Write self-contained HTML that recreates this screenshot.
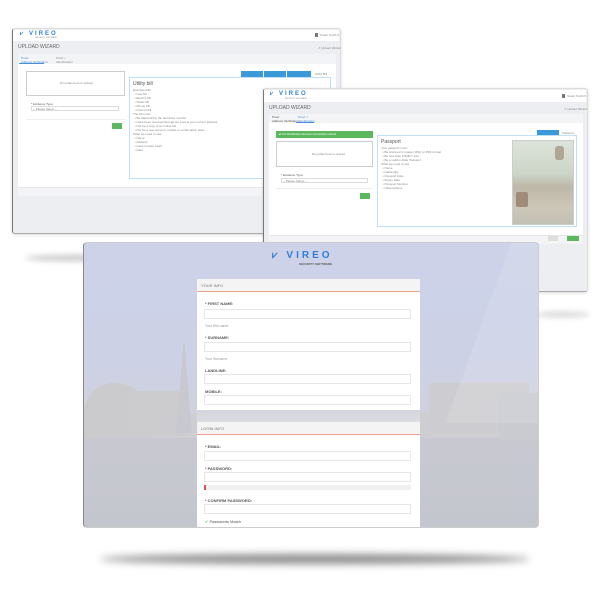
<!DOCTYPE html>
<html><head><style>
*{margin:0;padding:0;box-sizing:border-box}
body{width:600px;height:600px;background:#fff;position:relative;overflow:hidden;font-family:"Liberation Sans",sans-serif}
.a{position:absolute}
.t{position:absolute;font-size:3px;color:#888;white-space:nowrap}
.logo{position:absolute;color:#2f7fd8;font-weight:bold;letter-spacing:2px}
.lbl{position:absolute;left:8px;font-size:4px;color:#555;font-weight:bold}
.inp{position:absolute;left:7px;width:207px;height:10px;border:1px solid #e6e6e6;background:#fff}
.hint{position:absolute;left:8px;font-size:3.5px;color:#999}
</style></head><body>

<div class="a" style="left:25px;top:255px;width:110px;height:6px;border-radius:50%;background:rgba(0,0,0,.22);filter:blur(3px)"></div>
<div class="a" style="left:535px;top:312px;width:55px;height:5px;border-radius:50%;background:rgba(0,0,0,.18);filter:blur(3px)"></div>
<div class="a" style="left:100px;top:554px;width:430px;height:10px;border-radius:50%;background:rgba(0,0,0,.45);filter:blur(4px)"></div>

<!-- SCREEN 1 -->
<div class="a" style="left:12px;top:28px;width:329px;height:206px;background:#eceef2;border:1px solid #ddd;border-left:1.5px solid #777;border-bottom:1.5px solid #aaa;border-radius:3px;box-shadow:0 1px 3px rgba(0,0,0,.15)">
 <div class="a" style="left:0;top:1px;width:326px;height:11px;background:#fff"></div>
 <div class="logo" style="left:7px;top:2px;font-size:6px">⩗ VIREO</div>
 <div class="t" style="left:22px;top:8px;font-size:2px">SECURITY SOFTWARE</div>
 <div class="a" style="left:302px;top:4px;width:3px;height:4px;background:#777"></div>
 <div class="t" style="left:307px;top:4px">Stuart Smith ▾</div>
 <div class="t" style="left:5px;top:15px;font-size:5px;color:#666">UPLOAD WIZARD</div>
 <div class="t" style="left:305px;top:17px">⇗ Upload Wizard</div>
 <div class="a" style="left:5px;top:25px;width:318px;height:10px;background:#f3f4f6"></div>
 <div class="t" style="left:8px;top:27px;color:#4a90d9">Proof<br>Address Verification</div>
 <div class="a" style="left:6px;top:34px;width:25px;height:1px;background:#4a90d9"></div>
 <div class="t" style="left:43px;top:27px">Proof ✓<br>Identification</div>
 <div class="a" style="left:5px;top:35px;width:318px;height:123px;background:#fff"></div>
 <div class="a" style="left:13px;top:42px;width:99px;height:25px;border:1px solid #ccc"></div>
 <div class="t" style="left:47px;top:52px">Drop files here to upload</div>
 <div class="t" style="left:18px;top:73px;color:#555">* Evidence Type:</div>
 <div class="a" style="left:18px;top:77px;width:88px;height:5px;border:1px solid #ddd"></div>
 <div class="t" style="left:20px;top:78px">-- Please Select --</div>
 <div class="a" style="left:13px;top:90px;width:100px;height:1px;background:#eee"></div>
 <div class="a" style="left:99px;top:94px;width:10px;height:6px;background:#5cb85c"></div>
 <div class="a" style="left:228px;top:42px;width:22px;height:6px;background:#3a9ad9"></div>
 <div class="a" style="left:251px;top:42px;width:22px;height:6px;background:#3a9ad9"></div>
 <div class="a" style="left:274px;top:42px;width:24px;height:6px;background:#3a9ad9"></div>
 <div class="t" style="left:302px;top:43px">Utility Bill</div>
 <div class="a" style="left:116px;top:48px;width:202px;height:102px;border:1px solid #bfe0f5"></div>
 <div class="t" style="left:120px;top:52px;font-size:5px;color:#555">Utility bill</div>
 <div class="t" style="left:120px;top:59px;line-height:4px">Example bills:<br>&nbsp; • Gas bill<br>&nbsp; • Electric bill<br>&nbsp; • Water bill<br>&nbsp; • Phone bill<br>&nbsp; • Internet bill<br>The bill must:<br>&nbsp; • Be dated within the last three months<br>&nbsp; • Have been received through the post at your current address<br>&nbsp; • Not be a copy of an online bill<br>&nbsp; • Not be a new account, update or confirmation letter<br>What we need to see:<br>&nbsp; • Name<br>&nbsp; • Address<br>&nbsp; • Issuer's letter head<br>&nbsp; • Date</div>
 <div class="a" style="left:5px;top:158px;width:318px;height:9px;background:#f4f4f6;border-top:1px solid #e6e6e6"></div>
</div>

<!-- SCREEN 2 -->
<div class="a" style="left:263px;top:88px;width:325px;height:204px;background:#eceef2;border:1px solid #ddd;border-left:1.5px solid #777;border-bottom:1.5px solid #aaa;border-radius:3px;box-shadow:0 1px 3px rgba(0,0,0,.15)">
 <div class="a" style="left:0;top:1px;width:322px;height:12px;background:#fff"></div>
 <div class="logo" style="left:6px;top:2px;font-size:6px">⩗ VIREO</div>
 <div class="t" style="left:21px;top:9px;font-size:2px">SECURITY SOFTWARE</div>
 <div class="a" style="left:298px;top:5px;width:3px;height:4px;background:#777"></div>
 <div class="t" style="left:303px;top:5px">Stuart Smith ▾</div>
 <div class="t" style="left:5px;top:16px;font-size:5px;color:#666">UPLOAD WIZARD</div>
 <div class="t" style="left:300px;top:18px">⇗ Upload Wizard</div>
 <div class="a" style="left:5px;top:25px;width:314px;height:9px;background:#f3f4f6"></div>
 <div class="t" style="left:8px;top:26px;color:#555">Proof<br>Address Verification</div>
 <div class="t" style="left:34px;top:26px;color:#4a90d9">Proof ✓<br>Identification</div>
 <div class="a" style="left:32px;top:33px;width:18px;height:1px;background:#4a90d9"></div>
 <div class="a" style="left:5px;top:34px;width:314px;height:112px;background:#fff"></div>
 <div class="a" style="left:12px;top:42px;width:97px;height:7px;background:#5cb85c"></div>
 <div class="t" style="left:15px;top:44px;color:#fff;font-size:2.5px">■ Your identification has been successfully received</div>
 <div class="a" style="left:12px;top:52px;width:97px;height:26px;border:1px solid #ccc"></div>
 <div class="t" style="left:48px;top:63px">Drop files here to upload</div>
 <div class="t" style="left:17px;top:84px;color:#555">* Evidence Type:</div>
 <div class="a" style="left:17px;top:89px;width:87px;height:5px;border:1px solid #ddd"></div>
 <div class="t" style="left:19px;top:90px">-- Please Select --</div>
 <div class="a" style="left:12px;top:99px;width:97px;height:1px;background:#eee"></div>
 <div class="a" style="left:96px;top:104px;width:10px;height:6px;background:#5cb85c"></div>
 <div class="a" style="left:273px;top:41px;width:22px;height:6px;background:#3a9ad9"></div>
 <div class="t" style="left:298px;top:42px">Passport</div>
 <div class="a" style="left:113px;top:46px;width:200px;height:92px;border:1px solid #bfe0f5"></div>
 <div class="t" style="left:117px;top:50px;font-size:5px;color:#555">Passport</div>
 <div class="t" style="left:117px;top:57px;line-height:4px">Your passport must:<br>&nbsp; • Be scanned in image (JPG) or PDF format<br>&nbsp; • Be less than 10MB in size<br>&nbsp; • Be a valid in-Date Passport<br>What we need to see:<br>&nbsp; • Name<br>&nbsp; • Nationality<br>&nbsp; • Passport Date<br>&nbsp; • Expiry Date<br>&nbsp; • Passport Number<br>&nbsp; • Observations</div>
 <div class="a" style="left:248px;top:51px;width:62px;height:85px;background:linear-gradient(#dde3da 0%,#ccd5c8 40%,#bdb7a8 55%,#cdc7b8 80%,#c1c0b4 100%);border:1px solid #ccc"></div>
 <div class="a" style="left:291px;top:57px;width:9px;height:14px;background:#b0a696;border-radius:3px"></div>
 <div class="a" style="left:252px;top:103px;width:12px;height:15px;background:#a08b78;border-radius:2px"></div>
 <div class="a" style="left:5px;top:146px;width:314px;height:9px;background:#f4f4f6;border-top:1px solid #e6e6e6"></div>
 <div class="a" style="left:284px;top:147px;width:10px;height:5px;background:#ddd"></div>
 <div class="a" style="left:303px;top:147px;width:12px;height:5px;background:#5cb85c"></div>
</div>

<!-- SCREEN 3 -->
<div class="a" style="left:83px;top:242px;width:456px;height:286px;border:1px solid #ccc;border-left:1.5px solid #888;border-radius:4px;overflow:hidden;background:linear-gradient(#cdd2e8 0%,#ccd1e6 40%,#d0d1dc 60%,#c8c9d0 68%,#c4c6ce 100%)">
 <div class="a" style="left:0;top:170px;width:456px;height:25px;background:#cdcdd2"></div>
 <div class="a" style="left:0;top:140px;width:70px;height:55px;border-radius:30px 40px 0 0;background:#cbcacc"></div>
 <div class="a" style="left:45px;top:148px;width:60px;height:45px;background:#cccbce"></div>
 <div class="a" style="left:92px;top:95px;width:16px;height:95px;background:#c8c9d0;clip-path:polygon(50% 0,100% 100%,0 100%)"></div>
 <div class="a" style="left:345px;top:140px;width:100px;height:50px;background:#cdcdd1"></div>
 <div class="a" style="left:415px;top:150px;width:40px;height:48px;background:#cacbd0"></div>
 <div class="a" style="left:360px;top:0;width:100px;height:180px;background:linear-gradient(110deg,rgba(255,255,255,0) 40%,rgba(255,255,255,.12) 41%)"></div>
 <div class="logo" style="left:188px;top:7px;font-size:10px;letter-spacing:3px">⩗ VIREO</div>
 <div class="t" style="left:215px;top:19px;font-size:3px;color:#555;font-weight:bold">SECURITY SOFTWARE</div>
 <div class="a" style="left:113px;top:36px;width:223px;height:250px;background:#fff">
  <div class="a" style="left:0;top:0;width:223px;height:13px;background:#f4f4f4;border-bottom:1px solid #f2a08d"></div>
  <div class="t" style="left:4px;top:4px;font-size:4px;color:#777">YOUR INFO</div>
  <div class="lbl" style="top:22px">* FIRST NAME:</div>
  <div class="inp" style="top:30px"></div>
  <div class="hint" style="top:45px">Your first name</div>
  <div class="lbl" style="top:56px">* SURNAME:</div>
  <div class="inp" style="top:63px"></div>
  <div class="hint" style="top:78px">Your Surname</div>
  <div class="lbl" style="top:89px">LANDLINE:</div>
  <div class="inp" style="top:95px"></div>
  <div class="lbl" style="top:110px">MOBILE:</div>
  <div class="inp" style="top:116px"></div>
  <div class="a" style="left:0;top:131px;width:223px;height:12px;background:linear-gradient(#d4d5dc,#dcdde2)"></div>
  <div class="a" style="left:0;top:143px;width:223px;height:13px;background:#f4f4f4;border-bottom:1px solid #f2a08d"></div>
  <div class="t" style="left:4px;top:147px;font-size:4px;color:#777">LOGIN INFO</div>
  <div class="lbl" style="top:165px">* EMAIL:</div>
  <div class="inp" style="top:172px"></div>
  <div class="lbl" style="top:187px">* PASSWORD:</div>
  <div class="inp" style="top:193px"></div>
  <div class="a" style="left:7px;top:206px;width:207px;height:5px;background:#f0f0f0"></div>
  <div class="a" style="left:7px;top:206px;width:2px;height:5px;background:#d9534f"></div>
  <div class="lbl" style="top:219px">* CONFIRM PASSWORD:</div>
  <div class="inp" style="top:225px"></div>
  <div class="t" style="left:8px;top:240px;font-size:4px;color:#555"><span style="color:#5cb85c">✔</span> Passwords Match</div>
 </div>
</div>
</body></html>
